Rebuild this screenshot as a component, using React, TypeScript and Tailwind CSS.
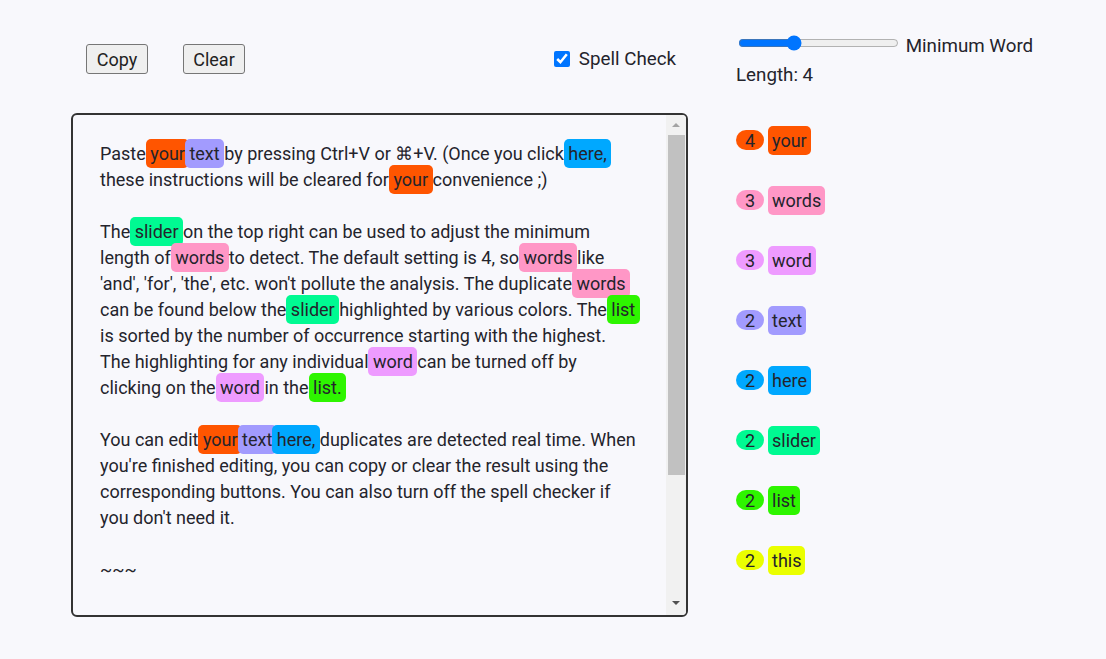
import React from "react";

const COLORS: Record<string, string> = {
  your: "bg-[#ff5500]",
  text: "bg-[#a29bfe]",
  here: "bg-[#00a8ff]",
  slider: "bg-[#00fa92]",
  list: "bg-[#2ef500]",
  this: "bg-[#eaff00]",
  words: "bg-[#ff97c6]",
  word: "bg-[#ee9bff]",
};

const COUNTS: [number, string][] = [
  [4, "your"],
  [3, "words"],
  [3, "word"],
  [2, "text"],
  [2, "here"],
  [2, "slider"],
  [2, "list"],
  [2, "this"],
];

// words wrapped in [] get highlighted
const PARAGRAPHS = [
  "Paste [your] [text] by pressing Ctrl+V or ⌘+V. (Once you click [here,] these instructions will be cleared for [your] convenience ;)",
  "The [slider] on the top right can be used to adjust the minimum length of [words] to detect. The default setting is 4, so [words] like 'and', 'for', 'the', etc. won't pollute the analysis. The duplicate [words] can be found below the [slider] highlighted by various colors. The [list] is sorted by the number of occurrence starting with the highest. The highlighting for any individual [word] can be turned off by clicking on the [word] in the [list.]",
  "You can edit [your] [text] [here,] duplicates are detected real time. When you're finished editing, you can copy or clear the result using the corresponding buttons. You can also turn off the spell checker if you don't need it.",
  "~~~",
];

function renderText(s: string) {
  return s.split(/(\[[^\]]+\])/).map((part, i) => {
    if (!part.startsWith("[")) return part;
    const word = part.slice(1, -1);
    const key = word.replace(/[^a-z]/g, "");
    return (
      <span key={i} className={`${COLORS[key]} rounded-[5px] px-[4.5px] -mx-[4.5px] py-1`}>
        {word}
      </span>
    );
  });
}

function Editor() {
  return (
    <div className="h-[504px] border-2 border-[#333] rounded-[6px] flex overflow-hidden bg-[#f8f8fc]">
      {/* Content */}
      <div className="flex-1 overflow-hidden px-[27px] pt-[26px] leading-[26px]">
        {PARAGRAPHS.map((p, i) => (
          <p key={i} className="mb-[26px]">
            {renderText(p)}
          </p>
        ))}
        <p className="pt-[6px]">Lorem ipsum dolor sit amet, this is placeholder filler text for the rest of the document.</p>
      </div>

      {/* Scrollbar */}
      <div className="w-[20px] bg-[#f1f1f1] flex flex-col items-center">
        <div className="h-[20px] flex items-center justify-center">
          <div className="w-0 h-0 border-x-[4px] border-x-transparent border-b-[4px] border-b-[#a3a3a3]" />
        </div>
        <div className="w-[17px] h-[340px] bg-[#c1c1c1]" />
        <div className="flex-1" />
        <div className="h-[22px] flex items-start justify-center pt-[8px]">
          <div className="w-0 h-0 border-x-[4px] border-x-transparent border-t-[4px] border-t-[#505050]" />
        </div>
      </div>
    </div>
  );
}

export default function App() {
  return (
    <div className="min-h-screen bg-[#f8f8fc] font-['Roboto',sans-serif] text-[18px] text-[#24242c]">
      <div className="flex pl-[71px] pt-[34px]">
        {/* Left */}
        <div className="w-[617px] flex flex-col">
          <div className="mt-[10px] h-[30px] flex items-center">
            <button className="ml-[15px] w-[62px] h-[30px] bg-[#efefef] border border-[#767676] rounded-[3px] text-[#222]">
              Copy
            </button>
            <button className="ml-[35px] w-[62px] h-[30px] bg-[#efefef] border border-[#767676] rounded-[3px] text-[#222]">
              Clear
            </button>
            <label className="ml-auto mr-[12px] flex items-center text-[18.75px]">
              <input type="checkbox" defaultChecked className="w-4 h-4 m-0" />
              <span className="ml-[9px]">Spell Check</span>
            </label>
          </div>
          <div className="mt-[39px]">
            <Editor />
          </div>
        </div>

        {/* Right */}
        <div className="ml-[48px] w-[310px]">
          <label className="block -mt-[2px] text-[18.75px] leading-[29px]">
            <input
              type="range"
              min={1}
              max={10}
              defaultValue={4}
              className="w-[161px] align-middle mx-[2px] mb-[8px]"
            />{" "}
            Minimum Word Length: 4
          </label>
          <div className="mt-[20px] flex flex-col">
            {COUNTS.map(([n, w]) => (
              <div key={w} className="h-[60px] flex items-center gap-1">
                <span className={`${COLORS[w]} w-7 h-5 rounded-full flex items-center justify-center`}>{n}</span>
                <span className={`${COLORS[w]} rounded-[5px] px-1 leading-[29px]`}>{w}</span>
              </div>
            ))}
          </div>
        </div>
      </div>
    </div>
  );
}
